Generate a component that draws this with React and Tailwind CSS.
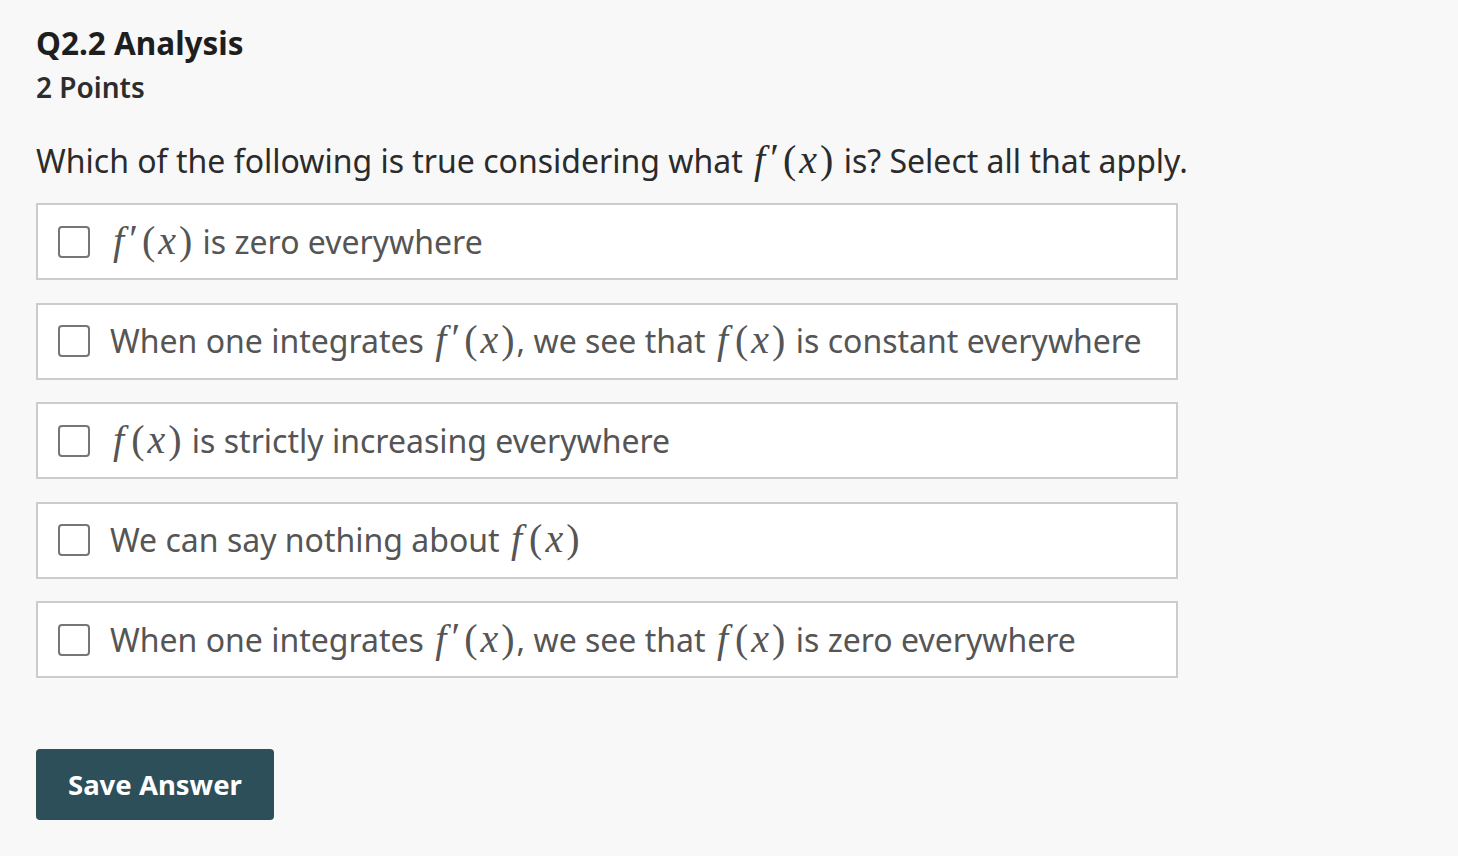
import React from "react";

function F({ prime }) {
  return (
    <span className="ml-[3px] mr-[2px] whitespace-nowrap font-['Liberation_Serif',serif] text-[1.25em] leading-none">
      <span className="italic">f</span>
      {prime ? (
        <span className="ml-[5px] mr-[4px] inline-block -translate-y-[2px]">′</span>
      ) : (
        <span className="ml-[7px]" />
      )}
      <span>(</span>
      <span className="ml-[3px] italic">x</span>
      <span className="ml-[3px]">)</span>
    </span>
  );
}

function Option({ children }) {
  return (
    <label className="flex h-[77px] items-center border-2 border-[#cccccc] bg-white pl-[20px]">
      <span className="h-[32px] w-[32px] shrink-0 rounded-[4px] border-2 border-[#767676] bg-white" />
      <span className="ml-[20px] text-[32px] text-[#555555]">{children}</span>
    </label>
  );
}

export default function App() {
  return (
    <div className="min-h-[856px] w-full bg-[#f8f8f8] font-['Noto_Sans',sans-serif]">
      <div className="px-[36px] pt-[23px]">
        <h2 className="text-[31.5px] font-bold leading-[40px] text-[#1e1e1e]">Q2.2 Analysis</h2>
        <div className="mt-[6px] text-[28px] font-semibold leading-[36px] text-[#2d2d2d]">2 Points</div>
        <p className="mt-[35px] text-[32px] leading-[42px] text-[#2b2b2b]">
          Which of the following is true considering what <F prime /> is? Select all that apply.
        </p>
        <div className="mt-[21px] flex w-[1142px] flex-col gap-[22.5px]">
          <Option>
            <F prime /> is zero everywhere
          </Option>
          <Option>
            When one integrates <F prime />, we see that <F /> is constant everywhere
          </Option>
          <Option>
            <F /> is strictly increasing everywhere
          </Option>
          <Option>
            We can say nothing about <F />
          </Option>
          <Option>
            When one integrates <F prime />, we see that <F /> is zero everywhere
          </Option>
        </div>
        <button className="mt-[71px] h-[71px] rounded-[4px] bg-[#2c4f5a] px-[32px] text-[27.5px] font-bold text-white">
          Save Answer
        </button>
      </div>
    </div>
  );
}
